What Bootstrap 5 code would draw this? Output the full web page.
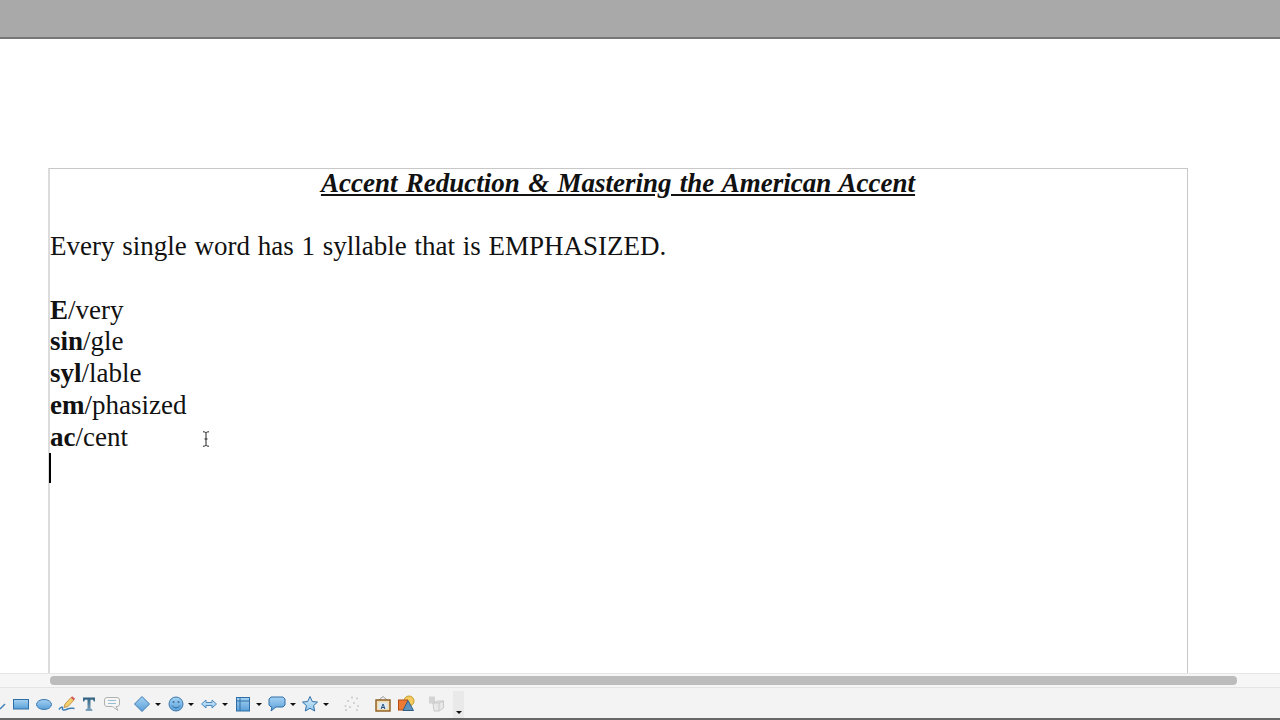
<!DOCTYPE html>
<html lang="en">
<head>
<meta charset="utf-8">
<title>Accent Reduction</title>
<link href="https://cdn.jsdelivr.net/npm/bootstrap@5.3.0/dist/css/bootstrap.min.css" rel="stylesheet">
<style>
html,body{height:100%;overflow:hidden;background:#fff}
.shell{height:720px}
.topband{height:39px;background:#a9a9a9;border-bottom:2px solid #777}
.workarea{height:634px;padding:129px 92px 0 48px;overflow:hidden}
.docpage{height:520px;border:1px solid #c8c8c8;border-left:2px solid #dcdcdc;font-family:"Liberation Serif",serif;font-size:27px;line-height:31.7px;color:#111;word-spacing:1px}
.docline{height:31.7px;white-space:nowrap}
.doctitle{font-weight:700;font-style:italic;text-decoration:underline;text-align:center;word-spacing:1.6px;margin-top:-1px;padding-right:1px}
.textcaret{display:block;width:1.5px;height:30px;background:#000;margin-left:-1px}
.ibeam{position:absolute;left:202px;top:431px;width:8px;height:16px}
.scrolltrack{height:15px;background:#f6f6f6;border-top:1px solid #e6e6e6;border-bottom:1px solid #e4e4e4;padding:2px 43px 0 50px}
.scrollthumb{height:9px;border-radius:4px;background:#bcbcbc}
.toolstrip{height:32px;background:#f3f3f3;border-bottom:2px solid #666;position:relative}
.tooli{position:absolute;top:7px;width:18px;height:18px;display:block;filter:blur(.25px)}
.dropcaret{position:absolute;top:15px;width:0;height:0;margin-left:-1px;border-left:3px solid transparent;border-right:3px solid transparent;border-top:3px solid #111}
.overflowbtn{position:absolute;left:453px;top:3px;width:11px;height:27px;background:#e9e9e9}
.overflowbtn i{position:absolute;left:2.500px;top:20px;width:0;height:0;border-left:3px solid transparent;border-right:3px solid transparent;border-top:3px solid #111}
</style>
</head>
<body>
<div class="shell d-flex flex-column position-relative">
  <div class="topband"></div>
  <div class="workarea">
    <div class="docpage">
      <div class="docline doctitle">Accent Reduction &amp; Mastering the American Accent</div>
      <div class="docline"></div>
      <div class="docline">Every single word has 1 syllable that is EMPHASIZED.</div>
      <div class="docline"></div>
      <div class="docline"><b>E</b>/very</div>
      <div class="docline"><b>sin</b>/gle</div>
      <div class="docline"><b>syl</b>/lable</div>
      <div class="docline"><b>em</b>/phasized</div>
      <div class="docline"><b>ac</b>/cent</div>
      <div class="docline"><span class="textcaret"></span></div>
    </div>
  </div>
  <svg class="ibeam" viewBox="0 0 8 16"><path d="M1 .8c1.500 0 2.500.2 3 1.200.5-1 1.500-1.200 3-1.200M4 2v12M1 15.200c1.500 0 2.500-.2 3-1.200.5 1 1.500 1.200 3 1.200M2.500 8h3" fill="none" stroke="#222" stroke-width="1"/></svg>
  <div class="scrolltrack"><div class="scrollthumb"></div></div>
  <div class="toolstrip">
    <svg width="0" height="0" style="position:absolute"><defs>
      <linearGradient id="gb" x1="0" y1="0" x2="0" y2="1"><stop offset="0" stop-color="#a5d2f3"/><stop offset="1" stop-color="#5a9fd8"/></linearGradient>
      <linearGradient id="gl" x1="0" y1="0" x2="0" y2="1"><stop offset="0" stop-color="#d5ebfa"/><stop offset="1" stop-color="#92c6ec"/></linearGradient>
      <linearGradient id="gt" x1="0" y1="0" x2="0" y2="1"><stop offset="0" stop-color="#2f5f80"/><stop offset="1" stop-color="#7fa5bd"/></linearGradient>
    </defs></svg>
    <svg class="tooli" style="left:-12px" viewBox="0 0 18 18"><path d="M12 14l5-5" stroke="#3f7fb8" stroke-width="1.500"/></svg>
    <svg class="tooli" style="left:12px" viewBox="0 0 18 18"><rect x="1.500" y="4.500" width="15" height="9.500" fill="url(#gb)" stroke="#2f6ea6"/></svg>
    <svg class="tooli" style="left:35px" viewBox="0 0 18 18"><ellipse cx="9" cy="9.500" rx="7.500" ry="5" fill="url(#gb)" stroke="#3a78ae"/></svg>
    <svg class="tooli" style="left:58px" viewBox="0 0 18 18"><path d="M7 9l6-6.500 3 2.500-6 6.500-4 1z" fill="#f2cf6a" stroke="#b07a2e" stroke-width=".7"/><path d="M13.500 2l3 2.500" stroke="#d8565a" stroke-width="2"/><path d="M1 14.500c2-3 4-3 3.500-1s2 2 5 .5 5-.5 7-.5" fill="none" stroke="#3f7fb8" stroke-width="1.500"/></svg>
    <svg class="tooli" style="left:80px" viewBox="0 0 18 18"><path d="M3 2.500h12v4h-1.200L13 4.800h-2.500V13.500l1.800.7V16H5.700v-1.800l1.800-.7V4.800H5L4.200 6.500H3z" fill="url(#gt)"/></svg>
    <svg class="tooli" style="left:103px" viewBox="0 0 18 18"><path d="M4 2.500h10c1.500 0 2.500 1 2.500 2.500v4c0 1.500-1 2.500-2.500 2.500h-1l2 4-5.500-4H4C2.500 11.500 1.500 10.500 1.500 9V5C1.500 3.500 2.500 2.500 4 2.500z" fill="#f5f5f5" stroke="#b0b0b0"/><path d="M5 5.500h8M5 8.500h8" stroke="#9dbdd3"/></svg>
    <svg class="tooli" style="left:133px" viewBox="0 0 18 18"><path d="M9 1.500L16.500 9 9 16.500 1.500 9z" fill="url(#gb)" stroke="#3a78ae"/></svg>
    <span class="dropcaret" style="left:156px"></span>
    <svg class="tooli" style="left:167px" viewBox="0 0 18 18"><circle cx="9" cy="9" r="7" fill="url(#gb)" stroke="#3a78ae"/><circle cx="6.500" cy="7" r="1" fill="#2f6ea6"/><circle cx="11.500" cy="7" r="1" fill="#2f6ea6"/><path d="M5 10.500c1.500 3 6.500 3 8 0" fill="none" stroke="#2f6ea6"/></svg>
    <span class="dropcaret" style="left:189px"></span>
    <svg class="tooli" style="left:200px" viewBox="0 0 18 18"><path d="M1.500 9l4.500-4v2.500h6V5l4.500 4-4.500 4v-2.500H6V13z" fill="url(#gl)" stroke="#4a88bd"/></svg>
    <span class="dropcaret" style="left:223px"></span>
    <svg class="tooli" style="left:234px" viewBox="0 0 18 18"><rect x="2.500" y="2.500" width="13" height="13.500" fill="url(#gb)" stroke="#2f6ea6"/><path d="M2.500 6h13M6 2.500V16" stroke="#2f6ea6"/></svg>
    <span class="dropcaret" style="left:257px"></span>
    <svg class="tooli" style="left:268px" viewBox="0 0 18 18"><path d="M3 2h12l2 2v6l-2 2H8l-5 4 1-4H3l-2-2V4z" fill="url(#gb)" stroke="#2f6ea6"/></svg>
    <span class="dropcaret" style="left:291px"></span>
    <svg class="tooli" style="left:301px" viewBox="0 0 18 18"><path d="M9 1.500l2.300 5 5.200.6-3.900 3.500 1.100 5.400L9 13.300 4.300 16l1.100-5.400L1.500 7.100l5.200-.6z" fill="url(#gl)" stroke="#2f6ea6"/></svg>
    <span class="dropcaret" style="left:324px"></span>
    <svg class="tooli" style="left:343px" viewBox="0 0 18 18"><g fill="#c9c9c9"><circle cx="9" cy="2.500" r="1"/><circle cx="14" cy="3.500" r="1"/><circle cx="5" cy="6" r="1"/><circle cx="11" cy="8" r="1"/><circle cx="2.500" cy="11" r="1"/><circle cx="15" cy="11" r="1"/><circle cx="7" cy="12" r="1"/><circle cx="3" cy="15" r="1"/><circle cx="14" cy="15" r="1"/></g></svg>
    <svg class="tooli" style="left:374px" viewBox="0 0 18 18"><path d="M5 5l4-3.500 4 3.500" fill="none" stroke="#999"/><rect x="2" y="5" width="14" height="11" fill="#f3ddb0" stroke="#8a5a1e" stroke-width="1.400"/><rect x="4.500" y="7.500" width="9" height="6.500" fill="#dfe9f2"/><text x="9" y="13.500" font-size="7" text-anchor="middle" font-family="Liberation Sans" fill="#24527a" font-weight="700">A</text></svg>
    <svg class="tooli" style="left:397px" viewBox="0 0 18 18"><circle cx="12" cy="6" r="5" fill="#f4cc5d" stroke="#c49a2e"/><rect x="1.500" y="5" width="9" height="10" fill="#ec7a35" stroke="#b14d16"/><path d="M11 5.500l5.500 10H6z" fill="#5d93bd" stroke="#2f5f88"/></svg>
    <svg class="tooli" style="left:427px" viewBox="0 0 18 18"><rect x="2" y="1.500" width="6" height="7" fill="#d3d3d3"/><path d="M6 8l5-2h5.500v7L12 16H7z" fill="#e8e8e8" stroke="#c8c8c8"/><path d="M6 8h6l4.500-2M12 8v8" fill="none" stroke="#c8c8c8"/></svg>
    <div class="overflowbtn"><i></i></div>
  </div>
</div>
</body>
</html>
